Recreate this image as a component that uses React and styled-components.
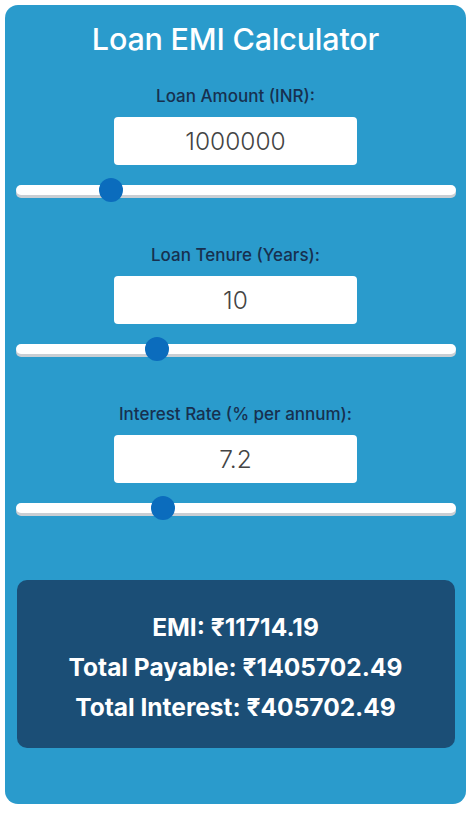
import React, { useState } from 'react';
import styled, { createGlobalStyle } from 'styled-components';

const GlobalStyle = createGlobalStyle`
  body {
    margin: 0;
    background: #ffffff;
    font-family: Inter, "Noto Sans", sans-serif;
  }
`;

const fields = [
  { key: 'amount', label: 'Loan Amount (INR):', min: 0, max: 5000000, step: 10000 },
  { key: 'tenure', label: 'Loan Tenure (Years):', min: 1, max: 30, step: 1 },
  { key: 'rate', label: 'Interest Rate (% per annum):', min: 1, max: 20, step: 0.1 },
];

function calcEmi(amount, tenure, rate) {
  const r = rate / 12 / 100;
  const n = tenure * 12;
  if (!n) return { emi: 0, total: 0, interest: 0 };
  const emi = r ? (amount * r * Math.pow(1 + r, n)) / (Math.pow(1 + r, n) - 1) : amount / n;
  const total = emi * n;
  return { emi, total, interest: total - amount };
}

const App = () => {
  const [values, setValues] = useState({ amount: 1000000, tenure: 10, rate: 7.2 });

  const update = (key, v) => setValues({ ...values, [key]: v });
  const { emi, total, interest } = calcEmi(
    Number(values.amount),
    Number(values.tenure),
    Number(values.rate)
  );

  return (
    <Page>
      <GlobalStyle />
      <Card>
        <Title>Loan EMI Calculator</Title>
        {fields.map((f) => (
          <Field key={f.key}>
            <Label>{f.label}</Label>
            <NumberInput
              type="text"
              value={values[f.key]}
              onChange={(e) => update(f.key, e.target.value)}
            />
            <Range
              type="range"
              min={f.min}
              max={f.max}
              step={f.step}
              value={values[f.key]}
              onChange={(e) => update(f.key, e.target.value)}
            />
          </Field>
        ))}
        <Results>
          <ResultLine>EMI: ₹{emi.toFixed(2)}</ResultLine>
          <ResultLine>Total Payable: ₹{total.toFixed(2)}</ResultLine>
          <ResultLine>Total Interest: ₹{interest.toFixed(2)}</ResultLine>
        </Results>
      </Card>
    </Page>
  );
};

const Page = styled.div`
  padding: 5px 8px 9px 5px;
`;

const Card = styled.div`
  width: 461px;
  height: 799px;
  box-sizing: border-box;
  background-color: #2a9bcc;
  border-radius: 13px;
  padding: 18px 12px 0;
  display: flex;
  flex-direction: column;
  align-items: center;
`;

const Title = styled.h1`
  margin: 0 0 31px;
  color: #ffffff;
  font-family: Inter, "Noto Sans", sans-serif;
  font-size: 30.5px;
  font-weight: 500;
  line-height: 32px;
  letter-spacing: -0.2px;
`;

const Field = styled.div`
  width: 100%;
  display: flex;
  flex-direction: column;
  align-items: center;
  & + & {
    margin-top: 43px;
  }
`;

const Label = styled.label`
  color: #17304f;
  font-size: 17px;
  font-weight: 500;
  line-height: 20px;
`;

const NumberInput = styled.input`
  margin-top: 11px;
  width: 243px;
  height: 48px;
  box-sizing: border-box;
  border: none;
  border-radius: 4px;
  background: #ffffff;
  text-align: center;
  font-family: Inter, "Noto Sans", sans-serif;
  font-size: 24.5px;
  font-weight: 300;
  color: #444444;
  outline: none;
`;

const Range = styled.input`
  -webkit-appearance: none;
  appearance: none;
  margin: 13px 0 0 0;
  width: 440px;
  height: 24px;
  background: transparent;
  cursor: pointer;

  &::-webkit-slider-runnable-track {
    height: 10px;
    border-radius: 5px;
    background: #ffffff;
    box-shadow: 0 3px 0 #c9ced3;
  }
  &::-webkit-slider-thumb {
    -webkit-appearance: none;
    width: 24px;
    height: 24px;
    margin-top: -7px;
    border-radius: 50%;
    background: #0b6cbd;
    border: none;
  }
  &::-moz-range-track {
    height: 10px;
    border-radius: 5px;
    background: #ffffff;
    box-shadow: 0 3px 0 #c9ced3;
  }
  &::-moz-range-thumb {
    width: 24px;
    height: 24px;
    border-radius: 50%;
    background: #0b6cbd;
    border: none;
  }
`;

const Results = styled.div`
  margin-top: 60px;
  width: 438px;
  height: 168px;
  box-sizing: border-box;
  padding-top: 6px;
  background-color: #1b4e76;
  border-radius: 10px;
  display: flex;
  flex-direction: column;
  justify-content: center;
  align-items: center;
`;

const ResultLine = styled.div`
  color: #ffffff;
  font-size: 24.5px;
  font-weight: 700;
  line-height: 40px;
`;

export default App;
